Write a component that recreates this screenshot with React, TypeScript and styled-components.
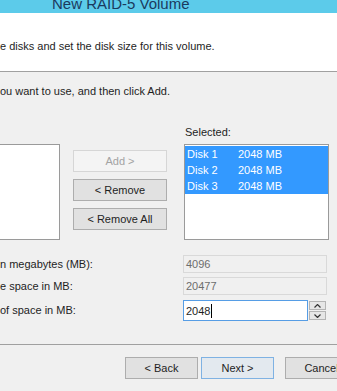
import React from "react";
import styled, { createGlobalStyle } from "styled-components";

const GlobalStyle = createGlobalStyle`
  html, body {
    margin: 0;
    padding: 0;
    background: #f0f0f0;
    overflow: hidden;
  }
`;

const Dialog = styled.div`
  width: 337px;
  height: 391px;
  display: flex;
  flex-direction: column;
  background: #f0f0f0;
  font-family: "Liberation Sans", Arial, sans-serif;
  font-size: 11px;
  color: #1e1e1e;
  overflow: hidden;
`;

const TitleBar = styled.div`
  height: 13px;
  flex: none;
  display: flex;
  align-items: flex-end;
  background: #5ccbea;
  overflow: hidden;
`;

const TitleText = styled.span`
  display: block;
  padding-left: 52px;
  margin-bottom: 1px;
  font-size: 15px;
  line-height: 17px;
  color: #1b3a5e;
  white-space: nowrap;
`;

const Header = styled.div`
  flex: none;
  height: 59px;
  background: #ffffff;
  border-bottom: 1px solid #a0a0a0;
  box-sizing: border-box;
  padding-top: 27px;
  line-height: 13px;
  white-space: nowrap;
`;

const Body = styled.div`
  flex: 1;
  display: flex;
  flex-direction: column;
`;

const Instruction = styled.div`
  margin-top: 13px;
  line-height: 13px;
  white-space: nowrap;
`;

const ListRow = styled.div`
  margin-top: 28px;
  display: flex;
  align-items: flex-start;
`;

const ListBox = styled.div<{ $width: number }>`
  width: ${(p) => p.$width}px;
  height: 96px;
  flex: none;
  box-sizing: border-box;
  background: #ffffff;
  border: 1px solid #9a9a9a;
  padding-top: 1px;
`;

const LeftList = styled(ListBox)`
  margin-top: 18px;
  margin-left: -2px;
`;

const ButtonColumn = styled.div`
  margin-left: 13px;
  margin-top: 24px;
  display: flex;
  flex-direction: column;
  gap: 7px;
`;

const Button = styled.button<{ $width: number }>`
  width: ${(p) => p.$width}px;
  height: 22px;
  flex: none;
  box-sizing: border-box;
  padding: 0;
  background: #e1e1e1;
  border: 1px solid #adadad;
  font-family: inherit;
  font-size: 11px;
  color: #1e1e1e;
  white-space: nowrap;
`;

const DisabledButton = styled(Button)`
  background: #f4f4f4;
  border-color: #d6d6d6;
  color: #a3a3a3;
`;

const DefaultButton = styled(Button)`
  background: #e3e9ef;
  border-color: #7fb2e3;
`;

const SelectedColumn = styled.div`
  margin-left: 17px;
  display: flex;
  flex-direction: column;
  gap: 5px;
`;

const Label = styled.div`
  line-height: 13px;
  padding-left: 1px;
  white-space: nowrap;
`;

const Item = styled.div`
  display: flex;
  height: 16px;
  line-height: 16px;
  background: #3399ff;
  color: #ffffff;
  padding-left: 2px;
`;

const ItemName = styled.span`
  width: 51px;
`;

const Fields = styled.div`
  margin-top: 15px;
  display: grid;
  grid-template-columns: 183px 144px;
  row-gap: 4px;
  align-items: center;
`;

const FieldLabel = styled.div`
  line-height: 13px;
  white-space: nowrap;
`;

const ReadOnlyField = styled.div`
  height: 18px;
  box-sizing: border-box;
  line-height: 16px;
  padding-left: 2px;
  background: #f0f0f0;
  border: 1px solid #d9d9d9;
  color: #6d6d6d;
`;

const SpinRow = styled.div`
  display: flex;
  align-items: center;
  gap: 1px;
  margin-top: 1px;
`;

const SpinInput = styled.div`
  width: 125px;
  height: 21px;
  box-sizing: border-box;
  display: flex;
  align-items: center;
  padding-left: 2px;
  background: #ffffff;
  border: 1px solid #569de5;
  color: #1e1e1e;
`;

const Caret = styled.span`
  width: 1px;
  height: 14px;
  margin-left: 1px;
  background: #000000;
`;

const Spinner = styled.div`
  display: flex;
  flex-direction: column;
  gap: 1px;
`;

const SpinButton = styled.div`
  width: 17px;
  height: 9px;
  box-sizing: border-box;
  display: flex;
  align-items: center;
  justify-content: center;
  background: #e6e6e6;
  border: 1px solid #b4b4b4;
`;

const Footer = styled.div`
  flex: none;
  height: 47px;
  box-sizing: border-box;
  border-top: 1px solid #a0a0a0;
  padding: 12px 0 0 125px;
  display: flex;
  gap: 3px;
`;

const CancelButton = styled(Button)`
  margin-left: 8px;
`;

const Chevron = ({ up }: { up?: boolean }) => (
  <svg width="7" height="4" viewBox="0 0 7 4">
    <path
      d={up ? "M0.5 3.5 L3.5 0.5 L6.5 3.5" : "M0.5 0.5 L3.5 3.5 L6.5 0.5"}
      fill="none"
      stroke="#333"
      strokeWidth="1.2"
    />
  </svg>
);

const disks = [
  { name: "Disk 1", size: "2048 MB" },
  { name: "Disk 2", size: "2048 MB" },
  { name: "Disk 3", size: "2048 MB" },
];

export default function App() {
  return (
    <Dialog>
      <GlobalStyle />
      <TitleBar>
        <TitleText>New RAID-5 Volume</TitleText>
      </TitleBar>
      <Header>e disks and set the disk size for this volume.</Header>
      <Body>
        <Instruction>ou want to use, and then click Add.</Instruction>
        <ListRow>
          <LeftList $width={62} />
          <ButtonColumn>
            <DisabledButton $width={94}>Add &gt;</DisabledButton>
            <Button $width={94}>&lt; Remove</Button>
            <Button $width={94}>&lt; Remove All</Button>
          </ButtonColumn>
          <SelectedColumn>
            <Label>Selected:</Label>
            <ListBox $width={145}>
              {disks.map((d) => (
                <Item key={d.name}>
                  <ItemName>{d.name}</ItemName>
                  <span>{d.size}</span>
                </Item>
              ))}
            </ListBox>
          </SelectedColumn>
        </ListRow>
        <Fields>
          <FieldLabel>n megabytes (MB):</FieldLabel>
          <ReadOnlyField>4096</ReadOnlyField>
          <FieldLabel>e space in MB:</FieldLabel>
          <ReadOnlyField>20477</ReadOnlyField>
          <FieldLabel>of space in MB:</FieldLabel>
          <SpinRow>
            <SpinInput>
              2048
              <Caret />
            </SpinInput>
            <Spinner>
              <SpinButton>
                <Chevron up />
              </SpinButton>
              <SpinButton>
                <Chevron />
              </SpinButton>
            </Spinner>
          </SpinRow>
        </Fields>
      </Body>
      <Footer>
        <Button $width={73}>&lt; Back</Button>
        <DefaultButton $width={73}>Next &gt;</DefaultButton>
        <CancelButton $width={73}>Cancel</CancelButton>
      </Footer>
    </Dialog>
  );
}
